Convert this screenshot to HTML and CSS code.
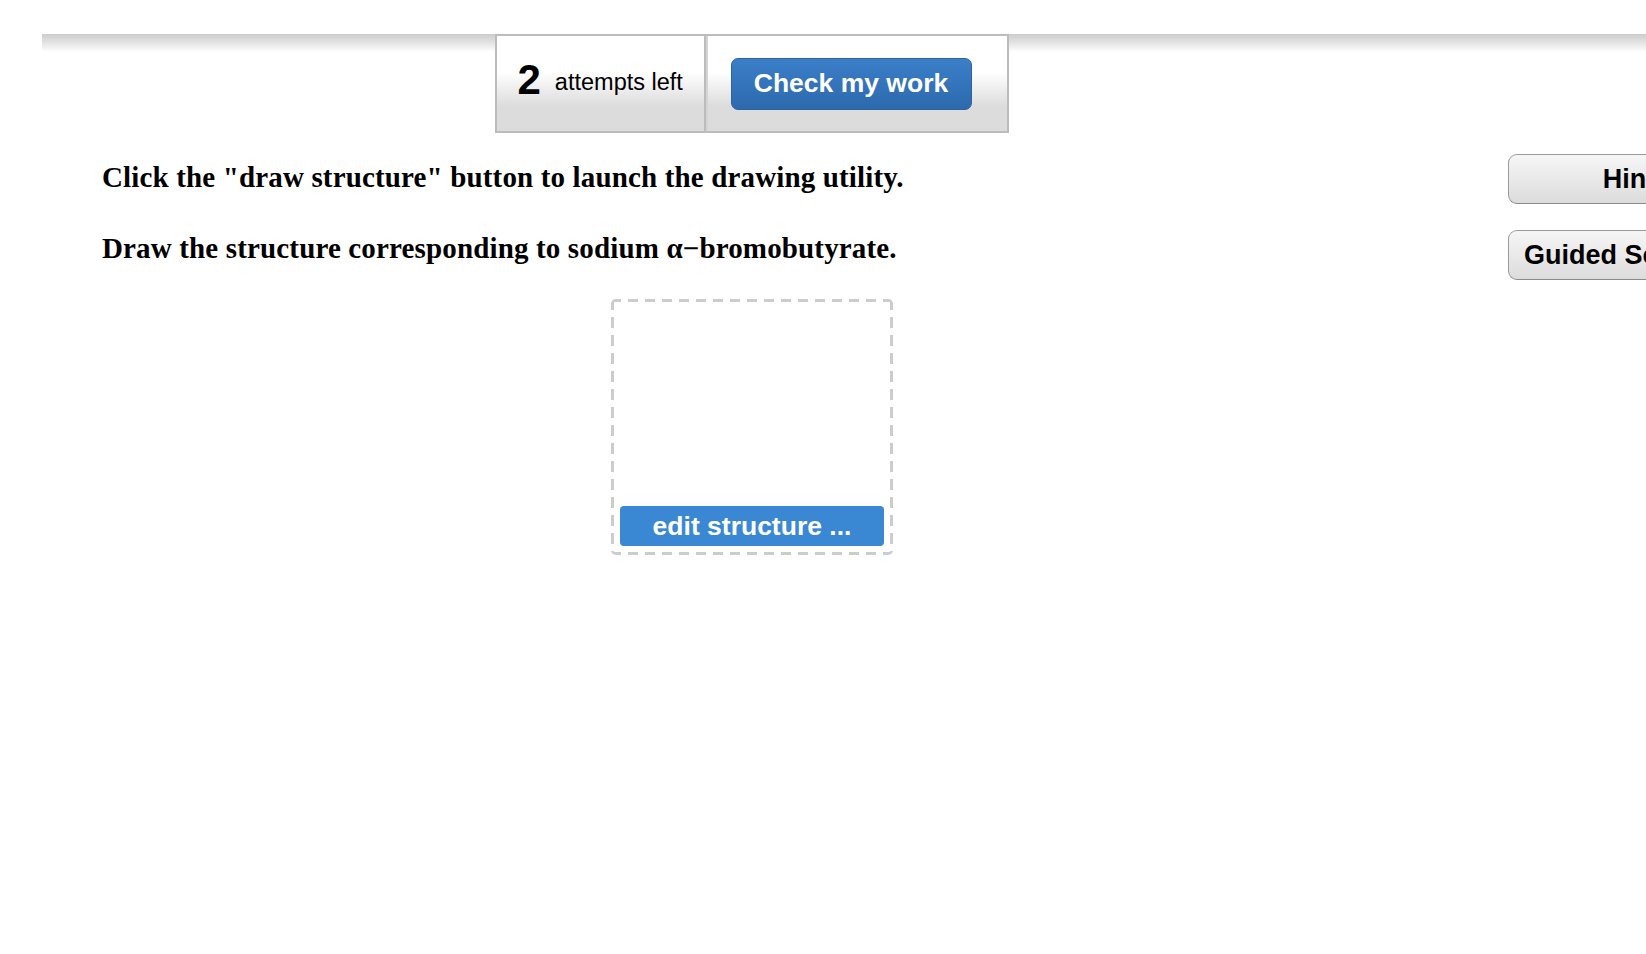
FILE: index.html
```html
<!DOCTYPE html>
<html>
<head>
<meta charset="utf-8">
<title>Draw structure</title>
<link rel="stylesheet" href="styles.css">
</head>
<body>
<header class="topbar">
  <div class="topbar-inner">
    <div class="attempts-box">
      <div class="attempts-cell">
        <span class="attempts-num">2</span>
        <span class="attempts-label">attempts left</span>
      </div>
      <div class="check-cell">
        <button class="check-btn">Check my work</button>
      </div>
    </div>
  </div>
</header>
<div class="layout">
  <main class="main">
    <p class="prompt prompt-first">Click the "draw structure" button to launch the drawing utility.</p>
    <p class="prompt prompt-second">Draw the structure corresponding to sodium α−bromobutyrate.</p>
    <div class="structure-wrap">
      <div class="structure-box">
        <button class="edit-btn">edit structure ...</button>
      </div>
    </div>
  </main>
  <aside class="side">
    <button class="side-btn hint-btn">Hint</button>
    <button class="side-btn guided-btn">Guided Solution</button>
  </aside>
</div>
</body>
</html>
```

FILE: styles.css
```css
html, body {
  margin: 0;
  padding: 0;
  background: #ffffff;
  overflow: hidden;
  width: 1646px;
  height: 954px;
}

body {
  font-family: "Liberation Sans", Arial, sans-serif;
  color: #000;
}

.topbar {
  margin: 34px 0 0 42px;
  background: linear-gradient(to bottom, #cccccc 0px, #e4e4e4 9px, #ffffff 18px) no-repeat;
  background-size: 100% 18px;
}

.topbar-inner {
  width: 1418px;
  display: flex;
  justify-content: center;
}

.attempts-box {
  display: flex;
  height: 99px;
  box-sizing: border-box;
  border: 2px solid #bcbcbc;
  background: linear-gradient(to bottom, #ffffff 0%, #ffffff 38%, #dcdcdc 74%, #dcdcdc 100%);
  width: 514px;
  margin-left: 1px;
}

.attempts-cell {
  width: 209px;
  box-sizing: border-box;
  border-right: 2px solid #bcbcbc;
  display: flex;
  align-items: center;
  padding: 0 0 8px 21px;
}

.attempts-num {
  font-size: 42px;
  font-weight: bold;
  line-height: 48px;
  letter-spacing: -1px;
}

.attempts-label {
  font-size: 23.5px;
  margin-left: 15px;
  margin-top: 6px;
}

.check-cell {
  flex: 1;
  border-left: 2px solid #d4d4d4;
  padding: 22px 0 0 23px;
}

.check-btn {
  width: 241px;
  height: 52px;
  border: 1px solid #2b63a3;
  border-radius: 7px;
  background: linear-gradient(to bottom, #3a7fc8 0%, #2d69ad 100%);
  color: #ffffff;
  font-family: "Liberation Sans", Arial, sans-serif;
  font-weight: bold;
  font-size: 26.5px;
  padding: 0 0 2px 0;
  margin: 0;
}

.layout {
  display: flex;
}

.main {
  margin-left: 42px;
  width: 1418px;
  flex: none;
}

.prompt {
  font-family: "Liberation Serif", "Times New Roman", serif;
  font-weight: bold;
  font-size: 29px;
  letter-spacing: 0.15px;
  line-height: 32px;
  margin: 0 0 0 60px;
}

.prompt-first {
  margin-top: 28px;
}

.prompt-second {
  margin-top: 39px;
}

.structure-wrap {
  display: flex;
  justify-content: center;
  margin-top: 35px;
}

.structure-box {
  width: 282px;
  height: 256px;
  box-sizing: border-box;
  border-radius: 5px;
  background:
    repeating-linear-gradient(to right, #cccccc 0 10px, transparent 10px 17px) left top / 100% 3px no-repeat,
    repeating-linear-gradient(to right, #cccccc 0 10px, transparent 10px 17px) left bottom / 100% 3px no-repeat,
    repeating-linear-gradient(to bottom, #cccccc 0 11px, transparent 11px 18px) left top / 3px 100% no-repeat,
    repeating-linear-gradient(to bottom, #cccccc 0 11px, transparent 11px 18px) right top / 3px 100% no-repeat;
  display: flex;
  align-items: flex-end;
  padding: 0 9px 9px 9px;
  margin-left: 2px;
}

.edit-btn {
  width: 264px;
  height: 40px;
  border: none;
  border-radius: 4px;
  background: #3a87d4;
  color: #ffffff;
  font-family: "Liberation Sans", Arial, sans-serif;
  font-weight: bold;
  font-size: 26.5px;
  padding: 0;
  margin: 0;
}

.side {
  padding: 21px 0 0 48px;
  display: flex;
  flex-direction: column;
  gap: 26px;
}

.side-btn {
  width: 250px;
  height: 50px;
  box-sizing: border-box;
  border: 1px solid #9a9a9a;
  border-bottom-color: #8a8a8a;
  border-radius: 9px;
  background: linear-gradient(to bottom, #f6f6f6 0%, #e9e9e9 50%, #dcdcdc 100%);
  font-family: "Liberation Sans", Arial, sans-serif;
  font-weight: bold;
  font-size: 27px;
  color: #000;
  padding: 0;
  margin: 0;
  text-align: center;
}

.hint-btn {
  padding-right: 8px;
}

.guided-btn {
  text-align: left;
  padding-left: 15px;
}
```
